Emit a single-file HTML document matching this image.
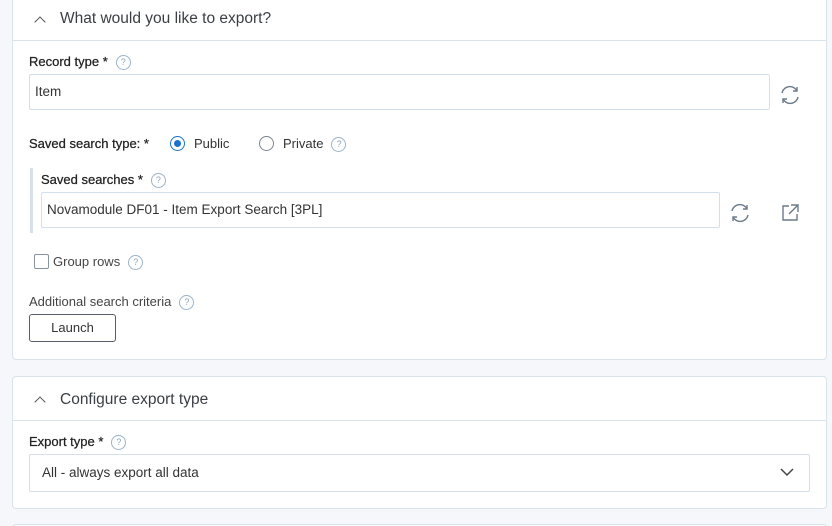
<!DOCTYPE html>
<html><head><style>
html,body{margin:0;width:832px;height:526px;overflow:hidden}
body{background:#f5f7fb;font-family:"Liberation Sans",sans-serif;color:#333;position:relative;font-size:13px}
.card{position:absolute;left:12px;width:813px;background:#fff;border:1px solid #d9e3ec;border-radius:4px}
.hd{position:absolute;left:0;right:0;border-bottom:1px solid #d9e3ec}
.ttl{position:absolute;left:47px;font-size:15.5px;color:#3a3f45}
.chev{position:absolute;left:23px;width:7px;height:7px;border-left:1.3px solid #555;border-top:1.3px solid #555;transform:rotate(45deg)}
.abs{position:absolute}
.lbl{color:#222;font-size:13px;-webkit-text-stroke:0.25px #222}
.q{display:inline-block;width:13px;height:13px;border:1px solid #9bb3c9;border-radius:50%;color:#8aa3bb;font-size:9px;text-align:center;line-height:13px;vertical-align:middle;margin-left:8px;-webkit-text-stroke:0}
.inp{position:absolute;border:1px solid #d3e0ec;border-radius:2px;background:#fff;font-size:13.5px;color:#333}
.radio{position:absolute;width:13px;height:13px;border:1px solid #7a8590;border-radius:50%}
</style></head><body>
<div class="card" style="top:-10px;height:368px">
 <div class="hd" style="top:0;height:49px"></div>
 <div class="chev" style="top:27px"></div>
 <div class="ttl" style="top:19px">What would you like to export?</div>
 <div class="abs lbl" style="left:16px;top:63px">Record type *<span class="q">?</span></div>
 <div class="inp" style="left:16px;top:83px;width:739px;height:34px"><span class="abs" style="left:5px;top:9px">Item</span></div>
 <svg class="abs" style="left:766px;top:93px" width="22" height="22" viewBox="0 0 22 22" fill="none" stroke="#6b7a88" stroke-width="1.4"><path d="M3 9A8 8 0 0 1 18 7M19 13A8 8 0 0 1 4 15"/><path d="M18 3v4h-4M4 19v-4h4"/></svg>
 <div class="abs lbl" style="left:16px;top:145px">Saved search type: *</div>
 <div class="radio" style="left:157px;top:145px;border-color:#1b74c9"><div style="margin:3px;width:7px;height:7px;border-radius:50%;background:#1b74c9"></div></div>
 <div class="abs" style="left:181px;top:145px">Public</div>
 <div class="radio" style="left:246px;top:145px"></div>
 <div class="abs" style="left:270px;top:145px">Private<span class="q">?</span></div>
 <div class="abs" style="left:17px;top:177px;width:3px;height:65px;background:#d7e0e8"></div>
 <div class="abs lbl" style="left:28px;top:181px">Saved searches *<span class="q">?</span></div>
 <div class="inp" style="left:28px;top:201px;width:677px;height:34px"><span class="abs" style="left:5px;top:9px">Novamodule DF01 - Item Export Search [3PL]</span></div>
 <svg class="abs" style="left:716px;top:211px" width="22" height="22" viewBox="0 0 22 22" fill="none" stroke="#6b7a88" stroke-width="1.4"><path d="M3 9A8 8 0 0 1 18 7M19 13A8 8 0 0 1 4 15"/><path d="M18 3v4h-4M4 19v-4h4"/></svg>
 <svg class="abs" style="left:766px;top:211px" width="22" height="22" viewBox="0 0 22 22" fill="none" stroke="#6b7a88" stroke-width="1.4"><path d="M10 4H4v14h14v-6"/><path d="M12 3h7v7M19 3l-9 9"/></svg>
 <div class="abs" style="left:21px;top:263px;width:13px;height:13px;border:1px solid #8793a0;border-radius:2px"></div>
 <div class="abs" style="left:40px;top:263px;color:#444">Group rows<span class="q">?</span></div>
 <div class="abs" style="left:16px;top:303px;color:#444">Additional search criteria<span class="q">?</span></div>
 <div class="abs" style="left:16px;top:323px;width:85px;height:26px;border:1px solid #555e68;border-radius:3px;text-align:center;line-height:26px">Launch</div>
</div>
<div class="card" style="top:376px;height:131px">
 <div class="hd" style="top:0;height:43px"></div>
 <div class="chev" style="top:21px"></div>
 <div class="ttl" style="top:14px">Configure export type</div>
 <div class="abs lbl" style="left:16px;top:57px">Export type *<span class="q">?</span></div>
 <div class="inp" style="left:16px;top:77px;width:779px;height:36px"><span class="abs" style="left:12px;top:10px">All - always export all data</span>
 <svg class="abs" style="left:750px;top:12px" width="14" height="10" viewBox="0 0 14 10" fill="none" stroke="#444" stroke-width="1.5"><path d="M1 2l6 6 6-6"/></svg></div>
</div>
<div class="card" style="top:524px;height:10px"></div>
</body></html>
